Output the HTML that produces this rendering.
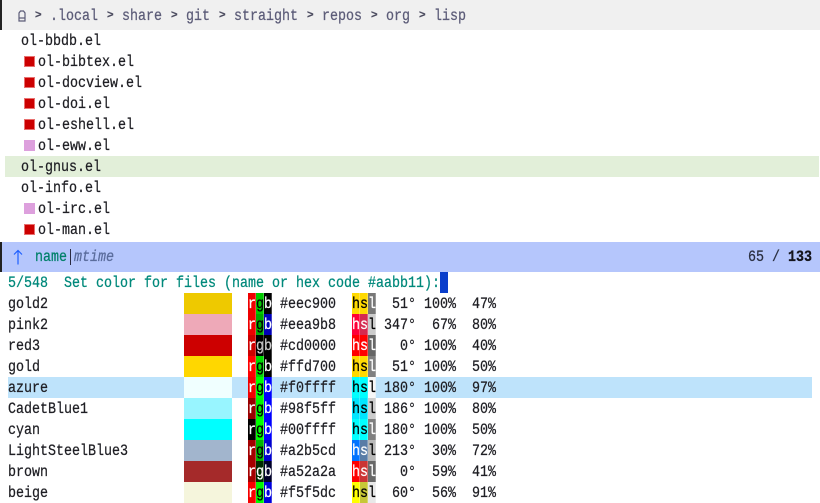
<!DOCTYPE html>
<html><head><meta charset="utf-8"><style>
html,body{margin:0;padding:0;background:#fff}
#p{position:relative;width:820px;height:503px;overflow:hidden;background:#fff;font:15.5px/23px "Liberation Mono",monospace;color:#1f1f24;-webkit-text-stroke:.25px currentColor}
#p div,#p b,#p i,#p span{position:absolute;white-space:pre}
#p span:not(.q):not(.a),#p b,#p i{transform:scaleX(.8602);transform-origin:0 0}
.f{height:21px}
.f>*{top:0}
.q{left:24px;width:11px;height:11px;background:#cc0000;outline:1px solid #e8706f;outline-offset:-1px}
.pl{background:#dda0dd;outline:none}
.h{color:#5c5c78;top:5px}
.a{color:#4a4a5e;top:5px;font-size:11px;font-weight:bold}
.c{width:9.3px;height:21px;overflow:hidden;text-align:center;color:#fff}
.k{color:#000}
.sw{left:184px;width:48px;height:21px}
</style></head><body><div id="p">
<div style="left:0;top:0;width:820px;height:30px;background:#f0f0f0"></div>
<div style="left:0;top:0;width:2px;height:30px;background:#222"></div>
<svg style="position:absolute;left:18px;top:10px" width="8" height="12" viewBox="0 0 8 12"><path d="M1 11V3L2.500 1H5.500L7 3V11ZM1 8H7" fill="none" stroke="#5c5c78" stroke-width="1.200"/></svg>
<span class="a" style="left:35px">&gt;</span><span class="h" style="left:50px">.local</span>
<span class="a" style="left:107px">&gt;</span><span class="h" style="left:122px">share</span>
<span class="a" style="left:171px">&gt;</span><span class="h" style="left:186px">git</span>
<span class="a" style="left:219px">&gt;</span><span class="h" style="left:234px">straight</span>
<span class="a" style="left:307px">&gt;</span><span class="h" style="left:322px">repos</span>
<span class="a" style="left:371px">&gt;</span><span class="h" style="left:386px">org</span>
<span class="a" style="left:419px">&gt;</span><span class="h" style="left:434px">lisp</span>

<div style="left:5px;top:156px;width:814px;height:21px;background:#e2efd9"></div>
<span style="left:21px;top:30px">ol-bbdb.el</span>
<span class="q" style="top:56px"></span><span style="left:38px;top:51px">ol-bibtex.el</span>
<span class="q" style="top:77px"></span><span style="left:38px;top:72px">ol-docview.el</span>
<span class="q" style="top:98px"></span><span style="left:38px;top:93px">ol-doi.el</span>
<span class="q" style="top:119px"></span><span style="left:38px;top:114px">ol-eshell.el</span>
<span class="q pl" style="top:140px"></span><span style="left:38px;top:135px">ol-eww.el</span>
<span style="left:21px;top:156px">ol-gnus.el</span>
<span style="left:21px;top:177px">ol-info.el</span>
<span class="q pl" style="top:203px"></span><span style="left:38px;top:198px">ol-irc.el</span>
<span class="q" style="top:224px"></span><span style="left:38px;top:219px">ol-man.el</span>

<div style="left:0;top:242px;width:820px;height:30px;background:#b5c6fc"></div>
<div style="left:0;top:242px;width:2px;height:30px;background:#222"></div>
<svg style="position:absolute;left:12px;top:249px" width="12" height="16" viewBox="0 0 12 16"><path d="M6 15.500V1.500M2 5.500L6 1.500L10 5.500" fill="none" stroke="#1f5fff" stroke-width="1.200"/></svg>
<span style="left:35px;top:246px;color:#00806a">name</span>
<div style="left:70px;top:249px;width:1px;height:16px;background:#2a2a40"></div>
<i style="left:74px;top:246px;color:#5a6c9c">mtime</i>
<span style="left:748px;top:246px;color:#2a2f40">65 / </span><b style="left:788px;top:246px;color:#15151c">133</b>

<span style="left:8px;top:272px;color:#00897b">5/548  Set color for files (name or hex code #aabb11):</span>
<div style="left:440px;top:272px;width:8px;height:21px;background:#0a3ecb"></div>

<div style="left:8px;top:377px;width:804px;height:21px;background:#bee3fb"></div>

<div class="f" style="left:0;top:293px;width:820px"><span style="left:8px">gold2</span><div class="sw" style="background:#eec900"></div><span class="c" style="left:248px;background:#ee0000">r</span><span class="c k" style="left:256px;background:#00c900">g</span><span class="c" style="left:264px;background:#000000">b</span><span style="left:280px">#eec900</span><span class="c k" style="left:352px;background:hsl(51,100%,50%)">h</span><span class="c k" style="left:360px;background:hsl(51,100%,50%)">s</span><span class="c" style="left:368px;background:#787878">l</span><span style="left:376px">  51° 100%  47%</span></div>

<div class="f" style="left:0;top:314px;width:820px"><span style="left:8px">pink2</span><div class="sw" style="background:#eea9b8"></div><span class="c" style="left:248px;background:#ee0000">r</span><span class="c k" style="left:256px;background:#00a900">g</span><span class="c" style="left:264px;background:#0000b8">b</span><span style="left:280px">#eea9b8</span><span class="c" style="left:352px;background:hsl(347,100%,50%)">h</span><span class="c" style="left:360px;background:hsl(347,67%,50%)">s</span><span class="c k" style="left:368px;background:#cccccc">l</span><span style="left:376px"> 347°  67%  80%</span></div>

<div class="f" style="left:0;top:335px;width:820px"><span style="left:8px">red3</span><div class="sw" style="background:#cd0000"></div><span class="c" style="left:248px;background:#cd0000">r</span><span class="c" style="left:256px;background:#000000;color:#ccc">g</span><span class="c" style="left:264px;background:#000000;color:#ccc">b</span><span style="left:280px">#cd0000</span><span class="c" style="left:352px;background:#ff0000">h</span><span class="c" style="left:360px;background:#ff0000">s</span><span class="c" style="left:368px;background:#666666">l</span><span style="left:376px">   0° 100%  40%</span></div>

<div class="f" style="left:0;top:356px;width:820px"><span style="left:8px">gold</span><div class="sw" style="background:#ffd700"></div><span class="c" style="left:248px;background:#ff0000">r</span><span class="c k" style="left:256px;background:#00d700">g</span><span class="c" style="left:264px;background:#000000">b</span><span style="left:280px">#ffd700</span><span class="c k" style="left:352px;background:hsl(51,100%,50%)">h</span><span class="c k" style="left:360px;background:hsl(51,100%,50%)">s</span><span class="c" style="left:368px;background:#808080">l</span><span style="left:376px">  51° 100%  50%</span></div>

<div class="f" style="left:0;top:377px;width:820px"><span style="left:8px">azure</span><div class="sw" style="background:#f0ffff"></div><span class="c" style="left:248px;background:#f00000">r</span><span class="c k" style="left:256px;background:#00ff00">g</span><span class="c" style="left:264px;background:#0000ff">b</span><span style="left:280px">#f0ffff</span><span class="c k" style="left:352px;background:#00ffff">h</span><span class="c k" style="left:360px;background:#00ffff">s</span><span class="c k" style="left:368px;background:#f7f7f7">l</span><span style="left:376px"> 180° 100%  97%</span></div>

<div class="f" style="left:0;top:398px;width:820px"><span style="left:8px">CadetBlue1</span><div class="sw" style="background:#98f5ff"></div><span class="c" style="left:248px;background:#980000">r</span><span class="c k" style="left:256px;background:#00f500">g</span><span class="c" style="left:264px;background:#0000ff">b</span><span style="left:280px">#98f5ff</span><span class="c k" style="left:352px;background:hsl(186,100%,50%)">h</span><span class="c k" style="left:360px;background:hsl(186,100%,50%)">s</span><span class="c k" style="left:368px;background:#cccccc">l</span><span style="left:376px"> 186° 100%  80%</span></div>

<div class="f" style="left:0;top:419px;width:820px"><span style="left:8px">cyan</span><div class="sw" style="background:#00ffff"></div><span class="c" style="left:248px;background:#000000">r</span><span class="c k" style="left:256px;background:#00ff00">g</span><span class="c" style="left:264px;background:#0000ff">b</span><span style="left:280px">#00ffff</span><span class="c k" style="left:352px;background:#00ffff">h</span><span class="c k" style="left:360px;background:#00ffff">s</span><span class="c" style="left:368px;background:#808080">l</span><span style="left:376px"> 180° 100%  50%</span></div>

<div class="f" style="left:0;top:440px;width:820px"><span style="left:8px">LightSteelBlue3</span><div class="sw" style="background:#a2b5cd"></div><span class="c" style="left:248px;background:#a20000">r</span><span class="c k" style="left:256px;background:#00b500">g</span><span class="c" style="left:264px;background:#0000cd">b</span><span style="left:280px">#a2b5cd</span><span class="c" style="left:352px;background:hsl(213,100%,50%)">h</span><span class="c" style="left:360px;background:hsl(213,30%,50%)">s</span><span class="c k" style="left:368px;background:#b8b8b8">l</span><span style="left:376px"> 213°  30%  72%</span></div>

<div class="f" style="left:0;top:461px;width:820px"><span style="left:8px">brown</span><div class="sw" style="background:#a52a2a"></div><span class="c" style="left:248px;background:#a50000">r</span><span class="c" style="left:256px;background:#002a00">g</span><span class="c" style="left:264px;background:#00002a">b</span><span style="left:280px">#a52a2a</span><span class="c" style="left:352px;background:#ff0000">h</span><span class="c" style="left:360px;background:hsl(0,59%,50%)">s</span><span class="c" style="left:368px;background:#696969">l</span><span style="left:376px">   0°  59%  41%</span></div>

<div class="f" style="left:0;top:482px;width:820px"><span style="left:8px">beige</span><div class="sw" style="background:#f5f5dc"></div><span class="c" style="left:248px;background:#f50000">r</span><span class="c k" style="left:256px;background:#00f500">g</span><span class="c" style="left:264px;background:#0000dc">b</span><span style="left:280px">#f5f5dc</span><span class="c k" style="left:352px;background:#ffff00">h</span><span class="c k" style="left:360px;background:hsl(60,56%,50%)">s</span><span class="c k" style="left:368px;background:#e8e8e8">l</span><span style="left:376px">  60°  56%  91%</span></div>
</div></body></html>
